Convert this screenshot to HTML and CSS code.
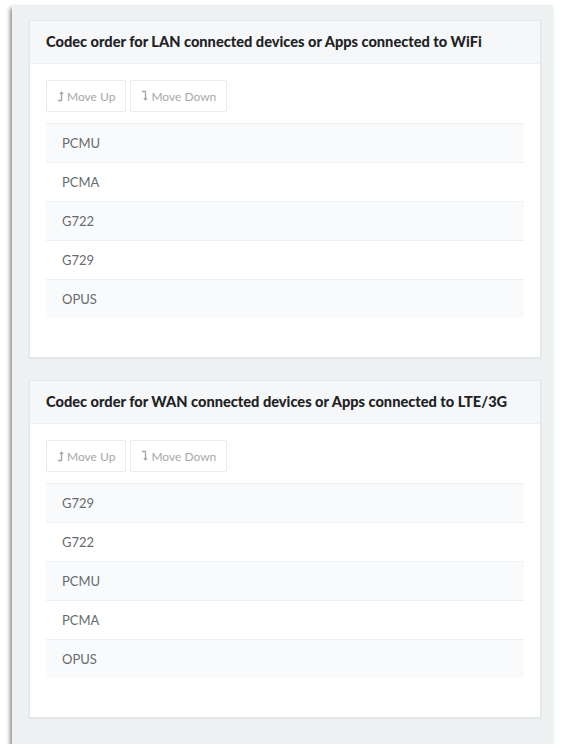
FILE: index.html
```html
<!DOCTYPE html>
<html lang="en">
<head>
    <meta charset="UTF-8">
    <meta name="viewport" content="width=device-width, initial-scale=1.0">
    <title>Codec order</title>
    <link rel="stylesheet" href="styles.css">
</head>
<body>
    <div class="frame">

        <div class="panel">
            <div class="panel-heading">Codec order for LAN connected devices or Apps connected to WiFi</div>
            <div class="panel-body">
                <div class="button-group">
                    <button class="btn" disabled>
                        <svg class="icon" viewBox="0 0 8 12"><path d="M1 10.5 H4.5 V3" /><path class="head" d="M2.2 4 L4.5 1 L6.8 4 Z" /></svg>Move Up
                    </button>
                    <button class="btn" disabled>
                        <svg class="icon" viewBox="0 0 8 12"><path d="M1 1.5 H4.5 V9" /><path class="head" d="M2.2 8 L4.5 11 L6.8 8 Z" /></svg>Move Down
                    </button>
                </div>
                <ul class="codec-list">
                    <li>PCMU</li>
                    <li>PCMA</li>
                    <li>G722</li>
                    <li>G729</li>
                    <li>OPUS</li>
                </ul>
            </div>
        </div>

        <div class="panel">
            <div class="panel-heading">Codec order for WAN connected devices or Apps connected to LTE/3G</div>
            <div class="panel-body">
                <div class="button-group">
                    <button class="btn" disabled>
                        <svg class="icon" viewBox="0 0 8 12"><path d="M1 10.5 H4.5 V3" /><path class="head" d="M2.2 4 L4.5 1 L6.8 4 Z" /></svg>Move Up
                    </button>
                    <button class="btn" disabled>
                        <svg class="icon" viewBox="0 0 8 12"><path d="M1 1.5 H4.5 V9" /><path class="head" d="M2.2 8 L4.5 11 L6.8 8 Z" /></svg>Move Down
                    </button>
                </div>
                <ul class="codec-list">
                    <li>G729</li>
                    <li>G722</li>
                    <li>PCMU</li>
                    <li>PCMA</li>
                    <li>OPUS</li>
                </ul>
            </div>
        </div>

    </div>
</body>
</html>
```

FILE: styles.css
```css
/* Basic styling */
body {
    font-family: Lato, "Open Sans", sans-serif;
    background-color: #fff;
    margin: 0;
    padding: 0;
}

.frame {
    margin: 5px 0 0 12px;
    width: 541px;
    height: 739px;
    box-sizing: border-box;
    padding: 15px 12px 0 17px;
    background-color: #eef1f2;
    box-shadow: -2px 3px 4px rgba(0, 0, 0, 0.45);
    display: flex;
    flex-direction: column;
    gap: 22px;
}

.panel {
    background-color: #fff;
    border: 1px solid #e3e7e9;
    box-shadow: 0 1px 2px rgba(0, 0, 0, 0.05);
}

.panel-heading {
    background-color: #f6f7f8;
    border-bottom: 1px solid #eceff0;
    height: 42px;
    line-height: 42px;
    padding: 0 16px;
    font-size: 14.6px;
    font-weight: 900;
    color: #1e2326;
}

.panel-body {
    padding: 16px 16px 39px 16px;
}

.button-group {
    display: flex;
    gap: 4px;
    margin-bottom: 11px;
}

.btn {
    height: 32px;
    padding: 0 10px;
    display: flex;
    align-items: center;
    gap: 2px;
    background-color: #fff;
    border: 1px solid #e8eaeb;
    border-radius: 2px;
    font-family: inherit;
    font-size: 12px;
    color: #a6a9ab;
}

.icon {
    width: 8px;
    height: 12px;
}

.icon path {
    fill: none;
    stroke: #a6a9ab;
    stroke-width: 1.4;
}

.icon .head {
    fill: #a6a9ab;
    stroke: none;
}

.codec-list {
    list-style: none;
    margin: 0;
    padding: 0;
}

.codec-list li {
    height: 38px;
    line-height: 38px;
    padding: 0 16px;
    border-top: 1px solid #eef0f1;
    font-size: 13px;
    color: #666b6e;
}

.codec-list li:nth-child(odd) {
    background-color: #f9fafb;
}
```
